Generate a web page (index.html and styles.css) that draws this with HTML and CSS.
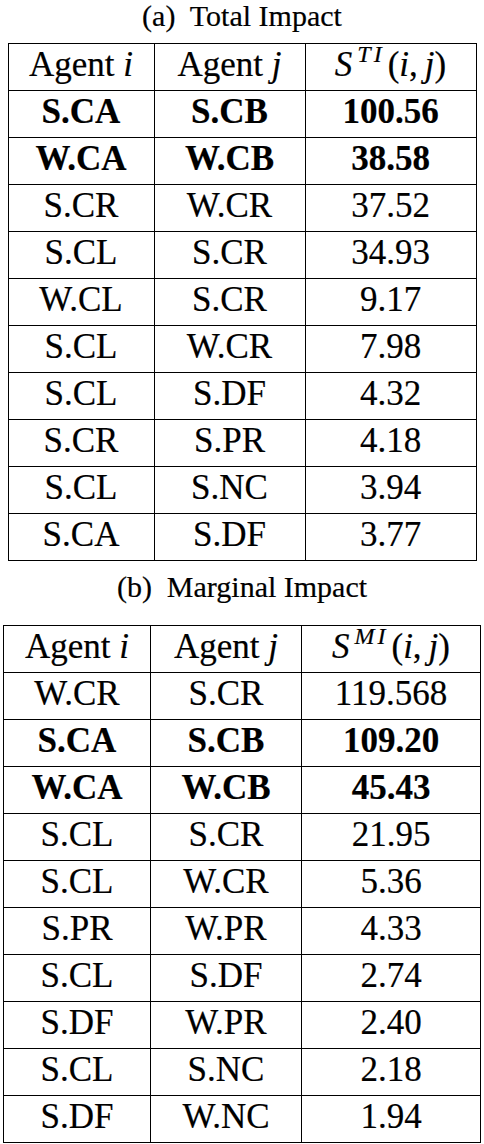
FILE: index.html
```html
<!DOCTYPE html>
<html lang="en">
<head>
    <meta charset="UTF-8">
    <title>Agent Impact Tables</title>
    <link rel="stylesheet" href="styles.css">
</head>
<body>

    <div class="caption caption-a">(a)&nbsp; Total Impact</div>
    <table class="impact total">
        <colgroup>
            <col class="col-i">
            <col class="col-j">
            <col class="col-s">
        </colgroup>
        <thead>
            <tr>
                <th>Agent <span class="math">i</span></th>
                <th>Agent <span class="math">j</span></th>
                <th><span class="math">S</span><sup class="math">TI</sup>(<span class="math">i</span>,<span class="thin"></span><span class="math">j</span>)</th>
            </tr>
        </thead>
        <tbody>
            <tr class="bold"><td>S.CA</td><td>S.CB</td><td>100.56</td></tr>
            <tr class="bold"><td>W.CA</td><td>W.CB</td><td>38.58</td></tr>
            <tr><td>S.CR</td><td>W.CR</td><td>37.52</td></tr>
            <tr><td>S.CL</td><td>S.CR</td><td>34.93</td></tr>
            <tr><td>W.CL</td><td>S.CR</td><td>9.17</td></tr>
            <tr><td>S.CL</td><td>W.CR</td><td>7.98</td></tr>
            <tr><td>S.CL</td><td>S.DF</td><td>4.32</td></tr>
            <tr><td>S.CR</td><td>S.PR</td><td>4.18</td></tr>
            <tr><td>S.CL</td><td>S.NC</td><td>3.94</td></tr>
            <tr><td>S.CA</td><td>S.DF</td><td>3.77</td></tr>
        </tbody>
    </table>

    <div class="caption caption-b">(b)&nbsp; Marginal Impact</div>
    <table class="impact marginal">
        <colgroup>
            <col class="col-i">
            <col class="col-j">
            <col class="col-s">
        </colgroup>
        <thead>
            <tr>
                <th>Agent <span class="math">i</span></th>
                <th>Agent <span class="math">j</span></th>
                <th><span class="math">S</span><sup class="math">MI</sup>(<span class="math">i</span>,<span class="thin"></span><span class="math">j</span>)</th>
            </tr>
        </thead>
        <tbody>
            <tr><td>W.CR</td><td>S.CR</td><td>119.568</td></tr>
            <tr class="bold"><td>S.CA</td><td>S.CB</td><td>109.20</td></tr>
            <tr class="bold"><td>W.CA</td><td>W.CB</td><td>45.43</td></tr>
            <tr><td>S.CL</td><td>S.CR</td><td>21.95</td></tr>
            <tr><td>S.CL</td><td>W.CR</td><td>5.36</td></tr>
            <tr><td>S.PR</td><td>W.PR</td><td>4.33</td></tr>
            <tr><td>S.CL</td><td>S.DF</td><td>2.74</td></tr>
            <tr><td>S.DF</td><td>W.PR</td><td>2.40</td></tr>
            <tr><td>S.CL</td><td>S.NC</td><td>2.18</td></tr>
            <tr><td>S.DF</td><td>W.NC</td><td>1.94</td></tr>
        </tbody>
    </table>

</body>
</html>
```

FILE: styles.css
```css
body {
    font-family: "Liberation Serif", "Times New Roman", serif;
    background-color: #ffffff;
    color: #000;
    margin: 0;
    padding: 0;
    -webkit-text-stroke: 0.2px #000;
}

/* Sub-table captions */
.caption {
    font-size: 30px;
    line-height: 32px;
    text-align: center;
}

.caption-a {
    margin-bottom: 11px;
}

.caption-b {
    margin-top: 10px;
    margin-bottom: 22px;
}

/* Tables */
.impact {
    margin: 0 auto;
    border-collapse: collapse;
    table-layout: fixed;
    font-size: 35px;
}

.impact th, .impact td {
    border: 1px solid #000;
    height: 47px;
    padding: 0 0 4px 0;
    line-height: 40px;
    text-align: center;
    vertical-align: middle;
    font-weight: normal;
    box-sizing: border-box;
    white-space: nowrap;
}

.impact tr.bold td {
    font-weight: bold;
}

.math {
    font-style: italic;
}

.thin {
    display: inline-block;
    width: 7px;
}

.impact sup {
    font-size: 24px;
    line-height: 0;
    vertical-align: 14px;
    margin-left: 5px;
    margin-right: 3px;
    letter-spacing: 3px;
}

/* Column widths, per table */
.total {
    width: 468px;
}

.total .col-i { width: 146px; }
.total .col-j { width: 151px; }
.total .col-s { width: 171px; }

.marginal {
    width: 477px;
}

.marginal .col-i { width: 147px; }
.marginal .col-j { width: 151px; }
.marginal .col-s { width: 179px; }
```
